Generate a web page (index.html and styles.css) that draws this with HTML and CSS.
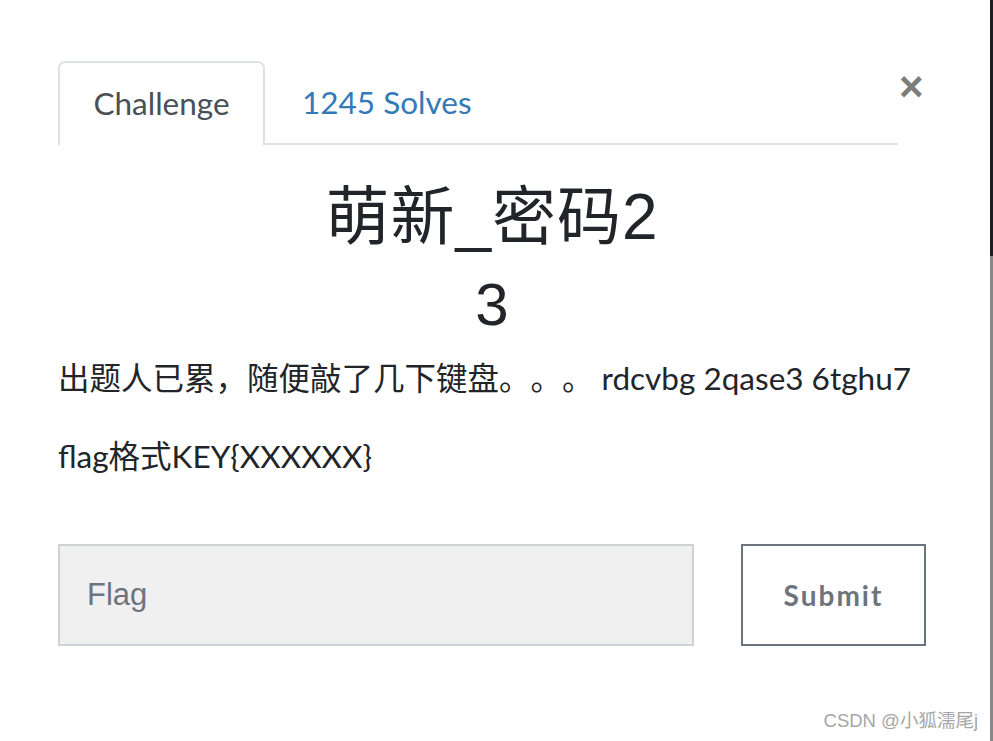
FILE: index.html
```html
<!DOCTYPE html>
<html lang="zh">
<head>
<meta charset="utf-8">
<link rel="stylesheet" href="styles.css">
</head>
<body>
<div class="modal">
  <div class="header">
    <div class="nav">
      <div class="tab active">Challenge</div>
      <div class="tab link">1245 Solves</div>
    </div>
    <div class="close">&times;</div>
  </div>
  <h2 class="title">萌新_密码2</h2>
  <h3 class="value">3</h3>
  <p class="desc">出题人已累，随便敲了几下键盘。。。 rdcvbg 2qase3 6tghu7</p>
  <p class="desc">flag格式KEY{XXXXXX}</p>
  <div class="form">
    <div class="input">Flag</div>
    <div class="btn">Submit</div>
  </div>
</div>
<div class="watermark">CSDN @小狐濡尾j</div>
<div class="scrollbar"><div class="thumb"></div></div>
</body>
</html>
```
FILE: styles.css
```css
html, body {
  margin: 0;
  padding: 0;
  background: #fff;
  height: 100%;
  overflow: hidden;
}
body {
  font-family: Lato, "Noto Sans CJK SC", sans-serif;
  color: #212529;
  text-spacing-trim: space-all;
}
.modal {
  width: 868px;
  margin-left: 58px;
  padding-top: 61px;
}
.header {
  display: flex;
  align-items: flex-start;
}
.nav {
  display: flex;
  width: 840px;
  border-bottom: 2px solid #dee2e6;
  height: 82px;
}
.tab {
  font-size: 31.5px;
  line-height: 82px;
  box-sizing: border-box;
}
.tab.active {
  color: #495057;
  border: 2px solid #dee2e6;
  border-bottom: none;
  border-radius: 7px 7px 0 0;
  background: #fff;
  height: 84px;
  line-height: 80px;
  width: 207px;
  text-align: center;
}
.tab.link {
  color: #337ab7;
  padding-left: 37px;
}
.close {
  font-family: "Liberation Sans", Arial, sans-serif;
  font-size: 42px;
  font-weight: bold;
  color: #7d7d7d;
  line-height: 1;
  margin-left: 1px;
  margin-top: 5px;
}
.title {
  font-family: "Liberation Sans", "Noto Sans CJK SC", sans-serif;
  font-weight: normal;
  font-size: 64px;
  letter-spacing: 1px;
  text-align: center;
  margin: 32px 0 0 0;
  line-height: 80px;
}
.value {
  font-family: "Liberation Sans", "Noto Sans CJK SC", sans-serif;
  font-weight: normal;
  font-size: 60px;
  text-align: center;
  margin: 15px 0 0 0;
  line-height: 66px;
}
.desc {
  font-size: 31.5px;
  margin: 16px 0 0 0;
  line-height: 48px;
}
.desc + .desc {
  margin-top: 30px;
}
.form {
  display: flex;
  gap: 47px;
  margin-top: 64px;
}
.input {
  width: 636px;
  height: 102px;
  box-sizing: border-box;
  background: #f0f0f0;
  border: 2px solid #cfd3d8;
  font-family: "Liberation Sans", Arial, sans-serif;
  font-size: 31px;
  color: #6c757d;
  padding-left: 27px;
  line-height: 98px;
}
.btn {
  width: 185px;
  height: 102px;
  box-sizing: border-box;
  border: 2px solid #6c757d;
  color: #6c757d;
  font-weight: bold;
  font-size: 28px;
  letter-spacing: 2px;
  text-align: center;
  line-height: 98px;
}
.watermark {
  position: absolute;
  right: 15px;
  bottom: 9px;
  font-family: "Liberation Sans", "Noto Sans CJK SC", sans-serif;
  font-size: 18.5px;
  color: #a6a6a6;
}
.scrollbar {
  position: absolute;
  top: 0;
  right: 0;
  width: 3px;
  height: 741px;
  background: #888;
}
.thumb {
  height: 256px;
  background: #1e1f26;
}
```
